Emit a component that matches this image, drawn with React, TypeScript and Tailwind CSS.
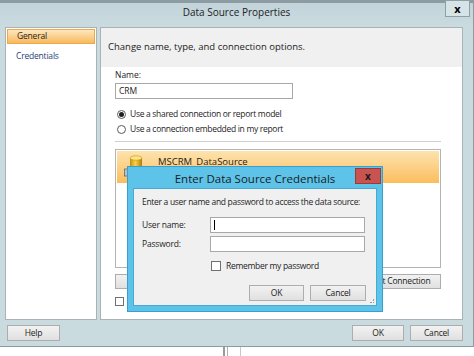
import React from 'react';

const Btn: React.FC<{ label: string; className?: string }> = ({ label, className = '' }) => (
  <div
    className={`flex items-center justify-center whitespace-nowrap border border-[#adadad] bg-gradient-to-b from-[#f2f2f2] to-[#e0e0e0] text-[8.5px] leading-none tracking-[-0.2px] text-[#1b1b1b] ${className}`}
  >
    {label}
  </div>
);

const Radio: React.FC<{ checked?: boolean; label: string }> = ({ checked, label }) => (
  <div className="flex h-[12px] items-center gap-[4px]">
    <span className="flex h-[9px] w-[9px] items-center justify-center rounded-full border border-[#5a5a5a] bg-white">
      {checked && <span className="h-[5px] w-[5px] rounded-full bg-[#1f1f1f]" />}
    </span>
    <span className="whitespace-nowrap text-[8.5px] leading-[12px] tracking-[-0.3px] text-[#1e1e1e]">{label}</span>
  </div>
);

const DbIcon: React.FC = () => (
  <svg width="20" height="22" viewBox="0 0 20 22">
    <defs>
      <linearGradient id="cyl" x1="0" x2="1" y1="0" y2="0">
        <stop offset="0" stopColor="#c98f10" />
        <stop offset="0.45" stopColor="#f6d24a" />
        <stop offset="1" stopColor="#b57a08" />
      </linearGradient>
    </defs>
    <path d="M6 3 v14 a6 2.2 0 0 0 12 0 v-14 z" fill="url(#cyl)" />
    <ellipse cx="12" cy="3" rx="6" ry="2.2" fill="#fbe58a" stroke="#c4930f" strokeWidth="0.6" />
    <rect x="0.5" y="14" width="7" height="7" fill="#b8c2c8" stroke="#5e6b72" strokeWidth="0.8" />
  </svg>
);

const App: React.FC = () => {
  return (
    <div className="relative h-[356px] w-[474px] overflow-hidden bg-white font-['Open_Sans','Noto_Sans',sans-serif] text-[#1e1e1e]">
      {/* main window */}
      <div className="flex h-[347px] flex-col border-t-[3px] border-r border-b border-[#8d9ca2] bg-[#cadbe0]">
        {/* title bar */}
        <div className="relative flex h-[24px] justify-center bg-gradient-to-b from-[#c2d4da] to-[#cadbe0] pt-[3px]">
          <span className="text-[10px] leading-[12px] text-[#222]">Data Source Properties</span>
          <div className="absolute right-[3px] top-[-3px] flex h-[17px] w-[25px] items-center justify-center border border-[#8f9fa6] bg-[#d6e3e7] text-[11px] font-bold leading-none text-black">
            x
          </div>
        </div>

        {/* panes */}
        <div className="flex h-[293px] gap-[3px] pl-[5px] pr-[10px]">
          {/* left nav */}
          <div className="flex w-[92px] flex-col border border-[#a9b3b7] bg-white p-[1px]">
            <div className="flex h-[15px] items-center border border-[#e9a94c] bg-gradient-to-b from-[#fde7bd] to-[#f8b959] pl-[9px] text-[8.5px] leading-none tracking-[-0.2px] text-[#1e1e1e]">
              General
            </div>
            <div className="mt-[5px] flex h-[14px] items-center pl-[9px] text-[8.5px] leading-none tracking-[-0.2px] text-[#1f3f7a]">
              Credentials
            </div>
          </div>

          {/* right content */}
          <div className="flex flex-1 flex-col border border-[#a9b3b7] bg-white">
            <div className="flex h-[39px] items-center bg-[#f0f0f0] pl-[7px] text-[9.5px] text-[#222]">
              Change name, type, and connection options.
            </div>
            <div className="flex flex-col pl-[14px] pr-[21px]">
              <div className="mt-[2px] text-[8.5px] leading-[12px]">Name:</div>
              <div className="mt-[2px] flex h-[16px] w-[178px] items-center border border-[#a8a8a8] bg-white pl-[3px] text-[8.5px] leading-none">
                CRM
              </div>
              <div className="mt-[9px] flex flex-col gap-[3px] pl-[2px]">
                <Radio checked label="Use a shared connection or report model" />
                <Radio label="Use a connection embedded in my report" />
              </div>
              <div className="mt-[6px] h-px bg-[#d0d0d0]" />
              <div className="mt-[7px] flex h-[119px] flex-col border border-[#b4b4b4] bg-white p-px">
                <div className="flex h-[32px] items-start gap-[14px] bg-gradient-to-b from-[#fde3ad] to-[#fbbd5c] pl-[7px] pt-[4px]">
                  <DbIcon />
                  <span className="pt-[1px] text-[9.5px] leading-[12px] text-[#1e1e1e]">MSCRM_DataSource</span>
                </div>
              </div>
              <div className="mt-[6px] flex justify-between">
                <Btn label="Edit..." className="h-[15px] w-[46px]" />
                <Btn label="Test Connection" className="h-[15px] w-[82px]" />
              </div>
              <div className="mt-[8px] flex items-center gap-[5px]">
                <span className="h-[9px] w-[9px] border border-[#707070] bg-white" />
                <span className="text-[8.5px] leading-none">Use single transaction</span>
              </div>
            </div>
          </div>
        </div>

        {/* bottom buttons */}
        <div className="flex flex-1 items-start justify-between pl-[7px] pr-[10px] pt-[5px]">
          <Btn label="Help" className="h-[16px] w-[53px]" />
          <div className="flex gap-[6px]">
            <Btn label="OK" className="h-[16px] w-[52px]" />
            <Btn label="Cancel" className="h-[16px] w-[53px]" />
          </div>
        </div>
      </div>

      {/* background bits below the window */}
      <div className="flex h-[9px] items-start pl-[223px]">
        <span className="h-[9px] w-[2px] bg-[#9a9a9a]" />
        <span className="ml-[2px] h-[9px] w-px bg-[#b0b0b0]" />
        <span className="ml-[12px] h-[9px] w-px bg-[#c8c8c8]" />
      </div>

      {/* credentials dialog */}
      <div className="absolute left-[127px] top-[166px] flex h-[146px] w-[256px] flex-col border border-[#3a9fce] bg-[#5ec3e9]">
        <div className="relative flex h-[21px] items-end justify-center pb-[2px]">
          <span className="text-[11.5px] leading-[14px] text-[#1b1b1b]">Enter Data Source Credentials</span>
          <div className="absolute right-[1px] top-[1px] flex h-[16px] w-[26px] items-center justify-center border border-[#9b3a38] bg-[#c85350] text-[10px] font-bold leading-none text-[#1b1b1b]">
            x
          </div>
        </div>
        <div className="relative mx-[5px] mb-[5px] flex flex-1 flex-col border border-[#4aa9d3] bg-[#f0f0f0] pl-[8px]">
          <div className="mt-[7px] whitespace-nowrap text-[8.5px] leading-[12px] tracking-[-0.3px]">
            Enter a user name and password to access the data source:
          </div>
          <div className="mt-[9px] flex items-center">
            <span className="w-[68px] text-[8.5px] leading-none tracking-[-0.2px]">User name:</span>
            <div className="flex h-[16px] w-[155px] items-center border border-[#a8a8a8] bg-white pl-[3px]">
              <span className="h-[10px] w-px bg-black" />
            </div>
          </div>
          <div className="mt-[3px] flex items-center">
            <span className="w-[68px] text-[8.5px] leading-none tracking-[-0.2px]">Password:</span>
            <div className="h-[16px] w-[155px] border border-[#a8a8a8] bg-white" />
          </div>
          <div className="mt-[9px] flex items-center gap-[5px] pl-[69px]">
            <span className="h-[10px] w-[10px] border border-[#707070] bg-white" />
            <span className="text-[8.5px] leading-none tracking-[-0.3px]">Remember my password</span>
          </div>
          <div className="mt-[14px] flex justify-end gap-[6px] pr-[10px]">
            <Btn label="OK" className="h-[16px] w-[55px]" />
            <Btn label="Cancel" className="h-[16px] w-[56px]" />
          </div>
          <span className="absolute bottom-[2px] right-[2px] h-[4px] w-[4px] border-r border-b border-dotted border-[#9a9a9a]" />
        </div>
      </div>
    </div>
  );
};

export default App;
